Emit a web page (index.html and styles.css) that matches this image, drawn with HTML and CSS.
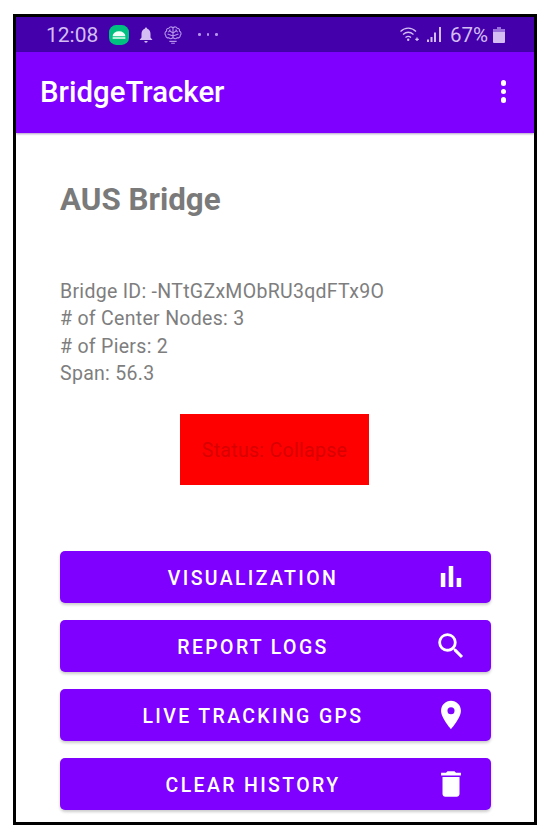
FILE: index.html
```html
<!DOCTYPE html>
<html>
<head>
    <title>BridgeTracker</title>
    <link rel="stylesheet" href="styles.css">
</head>
<body>
    <div class="phone">
        <div class="status-bar">
            <div class="status-left">
                <span class="clock">12:08</span>
                <svg class="app-icon" viewBox="0 0 22 22">
                    <rect width="22" height="22" rx="8" fill="#00c080"/>
                    <path d="M4 12.500a7 5.500 0 0 1 14 0z" fill="#f2fff8"/>
                    <rect x="4" y="13.500" width="14" height="1.600" fill="#f2fff8"/>
                </svg>
                <svg class="bell" viewBox="0 0 14 16">
                    <path d="M7 .5c.8 0 1.200.6 1.200 1.300C10.500 2.500 11.500 4.500 11.500 7v3.500L13.500 13H.5l2-2.500V7c0-2.500 1-4.500 3.300-5.200C5.800 1.100 6.200.5 7 .5z" fill="#d3bdf2"/>
                    <path d="M5.300 14h3.400a1.700 1.700 0 0 1-3.400 0z" fill="#d3bdf2"/>
                </svg>
                <svg class="brain" viewBox="0 0 22 20" fill="none" stroke="#b594ea" stroke-width="1.200">
                    <path d="M11 2c-2-1.500-4-1-4.500.5C4.500 2.500 3.500 4 4 5.500 2 6.500 1.500 9 3 10.500c0 2 2 3 3.500 2.500 1 1.200 3 1.200 4.500 0 1.500 1.200 3.500 1.200 4.500 0 1.500.5 3.500-.5 3.500-2.500 1.500-1.500 1-4-1-5 .5-1.500-.5-3-2.500-3C15 1 13 .5 11 2z"/>
                    <path d="M11 2v11M7 5l4 3M15 5l-4 3M5 9l6 2M17 9l-6 2M8 4l-2 3M14 4l2 3"/>
                    <path d="M7 17h8M9 19h4"/>
                </svg>
                <div class="more-dots"><i></i><i></i><i></i></div>
            </div>
            <div class="status-right">
                <svg class="wifi" viewBox="0 0 20 15" fill="none" stroke="#d3bdf2" stroke-width="1.300">
                    <path d="M.5 4.500c4.500-4.500 11-4.500 15.500 0M3 7.500c3.500-3 7-3 10.500 0M5.500 10.500c2-1.600 3.500-1.600 5.500 0"/>
                    <circle cx="8.200" cy="12.800" r="1.200" fill="#d3bdf2" stroke="none"/>
                    <path d="M17 10.500v3.500M15.300 12.300h3.500"/>
                </svg>
                <svg class="signal" viewBox="0 0 14 15" fill="#d3bdf2">
                    <rect x="0" y="12.500" width="2" height="2.500"/>
                    <rect x="3.500" y="10" width="2" height="5"/>
                    <rect x="7" y="5.500" width="2" height="9.500"/>
                    <rect x="12" y="0" width="2" height="15"/>
                </svg>
                <span class="battery-text">67%</span>
                <svg class="battery" viewBox="0 0 12 16">
                    <path d="M4 0h4v2h3a1 1 0 0 1 1 1v12a1 1 0 0 1-1 1H1a1 1 0 0 1-1-1V3a1 1 0 0 1 1-1h3z" fill="#d3bdf2"/>
                    <path d="M4 0h4v2h3a1 1 0 0 1 1 1v2H0V3a1 1 0 0 1 1-1h3z" fill="#9a70dc"/>
                </svg>
            </div>
        </div>

        <div class="app-bar">
            <span class="app-title">BridgeTracker</span>
            <div class="menu-dots"><i></i><i></i><i></i></div>
        </div>

        <div class="content">
            <h1 class="bridge-name">AUS Bridge</h1>
            <div class="info">
                <p>Bridge ID: -NTtGZxMObRU3qdFTx9O</p>
                <p># of Center Nodes: 3</p>
                <p># of Piers: 2</p>
                <p>Span: 56.3</p>
            </div>
            <div class="status-box">Status: Collapse</div>
            <div class="actions">
                <div class="action">
                    <span class="action-label">VISUALIZATION</span>
                    <svg class="action-icon" viewBox="0 0 24 24"><path d="M4.800 9.200H8V19H4.800zM10.400 4.240h3.200V19h-3.200zM16 12.700h3.200V19H16z" fill="#fff"/></svg>
                </div>
                <div class="action">
                    <span class="action-label">REPORT LOGS</span>
                    <svg class="action-icon" viewBox="0 0 24 24"><path d="M15.500 14h-.790l-.280-.270A6.470 6.470 0 0 0 16 9.500 6.500 6.500 0 1 0 9.500 16c1.610 0 3.090-.590 4.230-1.570l.270.280v.790l5 4.990L20.490 19l-4.990-5zm-6 0C7.010 14 5 11.990 5 9.500S7.010 5 9.500 5 14 7.010 14 9.500 11.990 14 9.500 14z" fill="#fff"/></svg>
                </div>
                <div class="action">
                    <span class="action-label">LIVE TRACKING GPS</span>
                    <svg class="action-icon" viewBox="0 0 24 24"><path d="M12 2C8.130 2 5 5.130 5 9c0 5.250 7 13 7 13s7-7.750 7-13c0-3.870-3.130-7-7-7zm0 9.500a2.500 2.500 0 0 1 0-5 2.500 2.500 0 0 1 0 5z" fill="#fff"/></svg>
                </div>
                <div class="action">
                    <span class="action-label">CLEAR HISTORY</span>
                    <svg class="action-icon" viewBox="0 0 24 24"><path d="M6 19c0 1.100.9 2 2 2h8c1.100 0 2-.9 2-2V7H6v12zM19 4h-3.500l-1-1h-5l-1 1H5v2h14V4z" fill="#fff"/></svg>
                </div>
            </div>
        </div>
    </div>
</body>
</html>
```

FILE: styles.css
```css
* {
    box-sizing: border-box;
}
body {
    margin: 0;
    background-color: #fff;
    font-family: Roboto, "Liberation Sans", sans-serif;
}
.phone {
    width: 524px;
    height: 811px;
    margin: 14px 0 0 13px;
    border: 3px solid #000;
    display: flex;
    flex-direction: column;
    overflow: hidden;
}

.status-bar {
    height: 35px;
    flex: none;
    background-color: #4300ab;
    display: flex;
    justify-content: space-between;
    align-items: center;
    padding: 0 29px 0 30px;
    color: #d3bdf2;
}
.status-left,
.status-right {
    display: flex;
    align-items: center;
}
.clock {
    font-size: 21px;
    margin-right: 11px;
}
.app-icon {
    width: 20px;
    height: 20px;
    margin-right: 10px;
}
.bell {
    width: 14px;
    height: 16px;
    margin-right: 10px;
}
.brain {
    width: 20px;
    height: 20px;
    margin-right: 15px;
}
.more-dots {
    display: flex;
    gap: 6px;
}
.more-dots i {
    width: 2.500px;
    height: 2.500px;
    border-radius: 50%;
    background-color: #b594ea;
}
.wifi {
    width: 20px;
    height: 15px;
    margin-right: 7px;
}
.signal {
    width: 14px;
    height: 15px;
    margin-right: 9px;
}
.battery-text {
    font-size: 20.500px;
    margin-right: 5px;
}
.battery {
    width: 12px;
    height: 16px;
}

.app-bar {
    height: 81px;
    flex: none;
    background-color: #7f00ff;
    display: flex;
    justify-content: space-between;
    align-items: center;
    padding: 0 28px 2px 24px;
    box-shadow: 0 1px 2px rgba(60, 0, 120, 0.4);
    z-index: 1;
}
.app-title {
    color: #fff;
    font-size: 29.400px;
    font-weight: 500;
}
.menu-dots {
    display: flex;
    flex-direction: column;
    gap: 3px;
}
.menu-dots i {
    width: 5.500px;
    height: 5.500px;
    border-radius: 50%;
    background-color: #fff;
}

.content {
    flex: 1;
    padding: 0 43px 0 44px;
    background-color: #fff;
    display: flex;
    flex-direction: column;
}
.bridge-name {
    margin: 49px 0 0;
    font-size: 31.300px;
    line-height: 36px;
    font-weight: 700;
    color: #7a7a7a;
}
.info {
    margin-top: 60px;
    font-size: 19.500px;
    line-height: 27.300px;
    letter-spacing: 0.300px;
    color: #7e7e7e;
}
.info p {
    margin: 0;
}
.status-box {
    width: 189px;
    height: 71px;
    margin: 27px 0 0 120px;
    padding-top: 1px;
    background-color: #ff0000;
    color: #d80000;
    font-size: 19.500px;
    letter-spacing: 0.300px;
    display: flex;
    align-items: center;
    justify-content: center;
}
.actions {
    margin-top: 66px;
    display: flex;
    flex-direction: column;
    gap: 17px;
}
.action {
    height: 52px;
    border-radius: 5px;
    background-color: #7f00ff;
    box-shadow: 0 2px 3px rgba(0, 0, 0, 0.2);
    display: flex;
    align-items: center;
    padding: 0 23px 0 12px;
    color: #fff;
}
.action-label {
    flex: 1;
    padding-top: 2px;
    text-align: center;
    font-size: 19.500px;
    font-weight: 500;
    letter-spacing: 2.350px;
}
.action-icon {
    width: 34px;
    height: 34px;
    flex: none;
}
```
